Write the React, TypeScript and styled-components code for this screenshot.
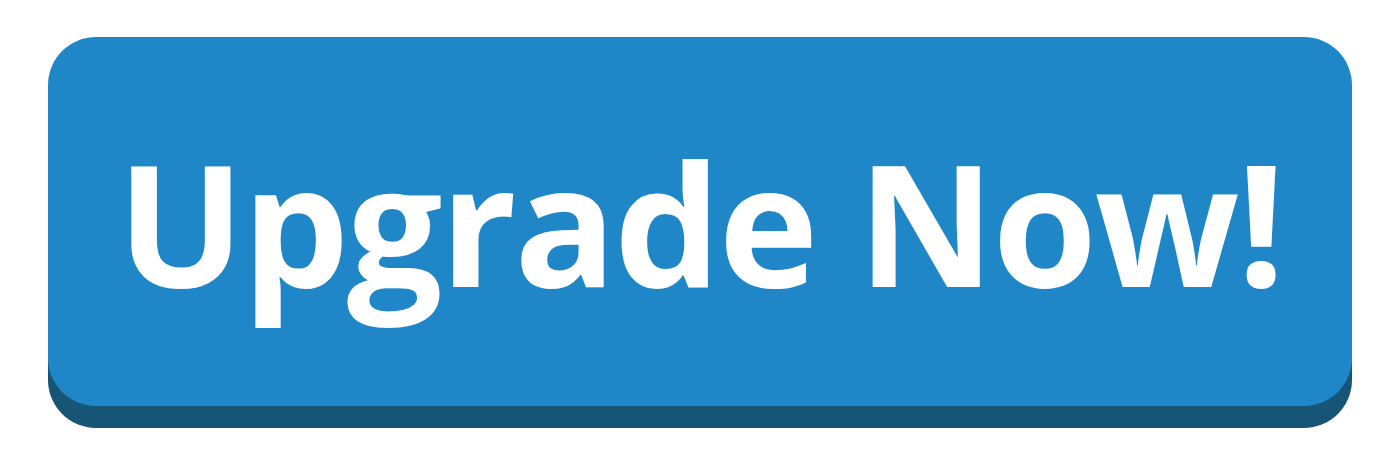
import React from "react";
import styled, { createGlobalStyle } from "styled-components";

const GlobalStyle = createGlobalStyle`
  html, body {
    margin: 0;
    padding: 0;
    background: #ffffff;
  }
  body {
    font-family: "Open Sans", "Liberation Sans", sans-serif;
  }
`;

const Page = styled.div`
  width: 1400px;
  height: 465px;
  box-sizing: border-box;
  padding: 37px 48px 0 48px;
  background: #ffffff;
`;

const UpgradeButton = styled.button`
  display: flex;
  align-items: center;
  justify-content: center;
  width: 1304px;
  height: 369px;
  box-sizing: border-box;
  padding: 0 0 1px 0;
  margin: 0;
  border: none;
  border-radius: 48px;
  background: #1f87c8;
  box-shadow: 0 22px 0 #175577;
  cursor: pointer;
`;

const Label = styled.span`
  font-family: "Open Sans", "Liberation Sans", sans-serif;
  font-weight: 700;
  font-size: 169px;
  line-height: 1;
  color: #ffffff;
  letter-spacing: -2.4px;
  white-space: nowrap;
`;

export default function App() {
  return (
    <>
      <GlobalStyle />
      <Page>
        <UpgradeButton type="button">
          <Label>Upgrade Now!</Label>
        </UpgradeButton>
      </Page>
    </>
  );
}
